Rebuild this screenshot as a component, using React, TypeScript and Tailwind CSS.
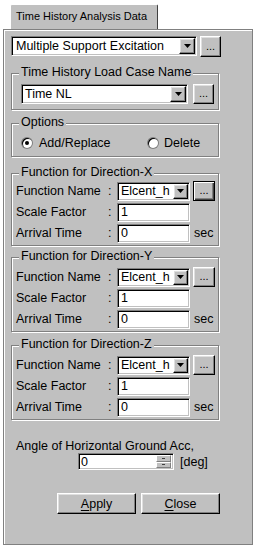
import type { ReactNode } from "react";

const field =
  "bg-white border border-t-[#808080] border-l-[#808080] border-b-white border-r-white shadow-[inset_1px_1px_0_#000,inset_-1px_-1px_0_#c0c0c0]";
const raised =
  "bg-[#c0c0c0] border border-t-white border-l-white border-b-black border-r-black shadow-[inset_-1px_-1px_0_#808080,inset_1px_1px_0_#dfdfdf]";
const etched = "relative border border-[#808080] shadow-[1px_1px_0_#fff,inset_1px_1px_0_#fff]";

function Arrow() {
  return (
    <svg width="7" height="4" viewBox="0 0 7 4">
      <polygon points="0,0 7,0 3.5,4" fill="#000" />
    </svg>
  );
}

function DropButton({ small }: { small?: boolean }) {
  return (
    <div
      className={`${raised} flex items-center justify-center shrink-0 mr-[1px] ${
        small ? "w-[15px] h-[15px]" : "w-[16px] h-[16px]"
      }`}
    >
      <Arrow />
    </div>
  );
}

function Dots({ className, isDefault }: { className: string; isDefault?: boolean }) {
  const look = isDefault
    ? "bg-[#c0c0c0] border border-black shadow-[inset_1px_1px_0_#fff,inset_-1px_-1px_0_#404040,inset_-2px_-2px_0_#808080]"
    : raised;
  return (
    <button type="button" className={`${look} ${className} flex items-end justify-center pb-[4px] text-[11px] leading-none shrink-0`}>
      ...
    </button>
  );
}

function Group({ title, className, children }: { title: string; className: string; children: ReactNode }) {
  return (
    <div className={`${etched} ${className}`}>
      <span className="absolute -top-[9px] left-[7px] px-[2px] bg-[#c0c0c0] leading-[14px]">{title}</span>
      {children}
    </div>
  );
}

function Radio({ checked }: { checked?: boolean }) {
  return (
    <div className="w-[12px] h-[12px] rounded-full bg-[#808080] p-[1px] shrink-0">
      <div className="w-full h-full rounded-full bg-white flex items-center justify-center shadow-[inset_1px_1px_0_#000]">
        {checked && <div className="w-[4px] h-[4px] rounded-full bg-black" />}
      </div>
    </div>
  );
}

function DirectionGroup({ axis, pad, className, isDefault }: { axis: string; pad: string; className: string; isDefault?: boolean }) {
  return (
    <Group title={`Function for Direction-${axis}`} className={`w-[208px] ${className}`}>
      <div className={`flex flex-col gap-[1px] pl-[4px] ${pad}`}>
        <div className="flex items-center h-[20px]">
          <span className="w-[92px]">Function Name</span>
          <span className="w-[9px]">:</span>
          <div className={`${field} w-[73px] h-[19px] flex items-center`}>
            <span className="flex-1 pl-[3px] truncate">Elcent_h</span>
            <DropButton small />
          </div>
          <Dots className="ml-[3px] w-[22px] h-[20px]" isDefault={isDefault} />
        </div>
        <div className="flex items-center h-[20px]">
          <span className="w-[92px]">Scale Factor</span>
          <span className="w-[9px]">:</span>
          <div className={`${field} w-[73px] h-[19px] flex items-center pl-[3px]`}>1</div>
        </div>
        <div className="flex items-center h-[20px]">
          <span className="w-[92px]">Arrival Time</span>
          <span className="w-[9px]">:</span>
          <div className={`${field} w-[73px] h-[19px] flex items-center pl-[3px]`}>0</div>
          <span className="ml-[4px]">sec</span>
        </div>
      </div>
    </Group>
  );
}

export default function App() {
  return (
    <div className="w-[258px] h-[550px] bg-white text-black text-[12.5px] leading-[14px] font-['Liberation_Sans',Arial,sans-serif] select-none">
      <div className="pt-[4px] pl-[10px] flex">
        <div className="h-[25px] w-[148px] bg-[#c0c0c0] border-t border-l border-r border-t-white border-l-white border-r-[#404040] rounded-t-[2px] text-[11px] leading-[14px] pl-[5px] pt-[4px]">
          Time History Analysis Data
        </div>
      </div>

      <div className={`${etched} ml-[3px] w-[250px] h-[516px] bg-[#c0c0c0] pl-[7px] pt-[6px]`}>
        <div className="flex items-start">
          <div className={`${field} w-[186px] h-[20px] flex items-center`}>
            <span className="flex-1 pl-[4px] truncate">Multiple Support Excitation</span>
            <DropButton />
          </div>
          <Dots className="ml-[3px] w-[21px] h-[21px]" />
        </div>

        <Group title="Time History Load Case Name" className="mt-[16px] w-[208px] h-[37px]">
          <div className="flex items-center pl-[9px] pt-[10px]">
            <div className={`${field} w-[167px] h-[20px] flex items-center`}>
              <span className="flex-1 pl-[3px] truncate">Time NL</span>
              <DropButton />
            </div>
            <Dots className="ml-[5px] w-[21px] h-[20px]" />
          </div>
        </Group>

        <Group title="Options" className="mt-[13px] w-[208px] h-[34px]">
          <div className="flex items-center pl-[9px] pt-[12px] h-[26px]">
            <div className="flex items-center gap-[6px] w-[126px]">
              <Radio checked />
              <span>Add/Replace</span>
            </div>
            <div className="flex items-center gap-[5px]">
              <Radio />
              <span>Delete</span>
            </div>
          </div>
        </Group>

        <DirectionGroup axis="X" pad="pt-[7px]" className="mt-[16px] h-[73px]" isDefault />
        <DirectionGroup axis="Y" pad="pt-[9px]" className="mt-[11px] h-[75px]" />
        <DirectionGroup axis="Z" pad="pt-[9px]" className="mt-[13px] h-[75px]" />

        <p className="mt-[19px] ml-[5px]">Angle of Horizontal Ground Acc,</p>
        <div className="flex items-center">
          <div className={`${field} ml-[67px] w-[96px] h-[17px] flex items-center`}>
            <span className="flex-1 pl-[2px]">0</span>
            <div className="flex flex-col w-[15px] h-[13px] mr-[2px]">
              <div className="flex-1 bg-[#c0c0c0] border border-t-white border-l-white border-b-[#808080] border-r-[#808080] flex items-center justify-center">
                <div className="w-[3px] h-[1px] bg-[#404040]" />
              </div>
              <div className="flex-1 bg-[#c0c0c0] border border-t-white border-l-white border-b-[#808080] border-r-[#808080] flex items-center justify-center">
                <div className="w-[3px] h-[1px] bg-[#404040]" />
              </div>
            </div>
          </div>
          <span className="ml-[6px]">[deg]</span>
        </div>

        <div className="flex mt-[23px] ml-[46px] gap-[5px]">
          <button type="button" className={`${raised} w-[79px] h-[21px] leading-[14px]`}>
            <span className="underline underline-offset-2">A</span>pply
          </button>
          <button type="button" className={`${raised} w-[79px] h-[21px] leading-[14px]`}>
            <span className="underline underline-offset-2">C</span>lose
          </button>
        </div>
      </div>
    </div>
  );
}
